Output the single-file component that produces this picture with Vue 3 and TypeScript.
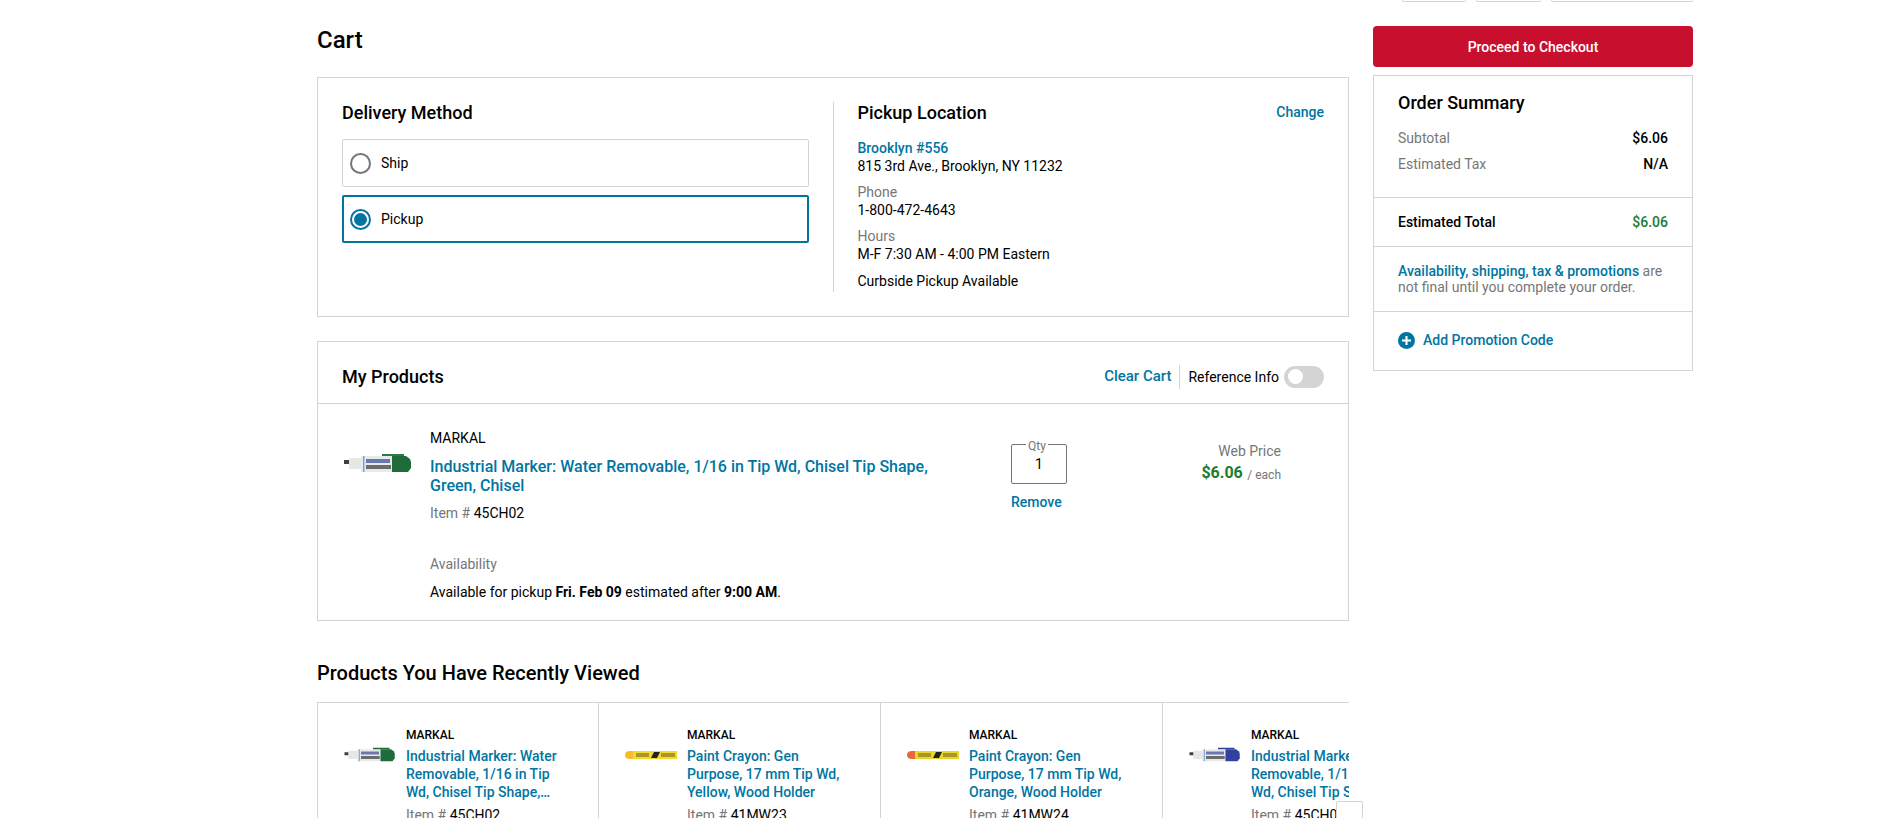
<script setup lang="ts">
interface RecentItem {
  kind: 'marker' | 'crayon'
  color: string
  band?: string
  title: string
  sku: string
}

const recent: RecentItem[] = [
  { kind: 'marker', color: '#1f6b3a', title: 'Industrial Marker: Water Removable, 1/16 in Tip Wd, Chisel Tip Shape,…', sku: '45CH02' },
  { kind: 'crayon', color: '#f5bc2a', band: '#f4d92e', title: 'Paint Crayon: Gen Purpose, 17 mm Tip Wd, Yellow, Wood Holder', sku: '41MW23' },
  { kind: 'crayon', color: '#e8683a', band: '#e9d828', title: 'Paint Crayon: Gen Purpose, 17 mm Tip Wd, Orange, Wood Holder', sku: '41MW24' },
  { kind: 'marker', color: '#34409e', title: 'Industrial Marker: Water Removable, 1/16 in Tip Wd, Chisel Tip Shape,…', sku: '45CH03' },
]
</script>

<template>
  <div class="page">
    <main class="main-col">
      <h1 class="cart-title">Cart</h1>

      <!-- delivery -->
      <section class="card delivery">
        <div class="delivery-left">
          <h2 class="h2">Delivery Method</h2>
          <div class="radio-box">
            <span class="radio"></span>
            <span>Ship</span>
          </div>
          <div class="radio-box selected">
            <span class="radio on"></span>
            <span>Pickup</span>
          </div>
        </div>
        <div class="delivery-right">
          <div class="loc-head">
            <h2 class="h2">Pickup Location</h2>
            <a class="link strong change">Change</a>
          </div>
          <div class="loc-group">
            <a class="link strong block">Brooklyn #556</a>
            <div>815 3rd Ave., Brooklyn, NY 11232</div>
          </div>
          <div class="loc-group">
            <div class="muted">Phone</div>
            <div>1-800-472-4643</div>
          </div>
          <div class="loc-group">
            <div class="muted">Hours</div>
            <div>M-F 7:30 AM - 4:00 PM Eastern</div>
          </div>
          <div class="loc-group curbside">Curbside Pickup Available</div>
        </div>
      </section>

      <!-- my products -->
      <section class="card products">
        <div class="products-head">
          <h2 class="h2">My Products</h2>
          <div class="head-actions">
            <a class="link strong clear">Clear Cart</a>
            <span class="vline"></span>
            <span>Reference Info</span>
            <span class="toggle"><span class="knob"></span></span>
          </div>
        </div>
        <div class="line-item">
          <svg class="thumb" viewBox="0 0 68 20">
            <rect x="0" y="7" width="6" height="4" fill="#3c4038" />
            <rect x="5" y="5" width="13" height="11" fill="#e6e8e8" />
            <rect x="17" y="3" width="33" height="16" rx="1" fill="#e8eaea" />
            <rect x="19" y="3" width="1.5" height="16" fill="#7aa2d4" />
            <rect x="22" y="6" width="24" height="4" fill="#6a78b0" />
            <rect x="22" y="12" width="25" height="4" fill="#6c6c6c" />
            <rect x="38" y="1" width="22" height="2" fill="#2c7a4a" />
            <path d="M48 3 L62 3 L66 6 L67 9 L67 15 L64 19 L48 19 Z" fill="#1f6b3a" />
          </svg>
          <div class="item-info">
            <div class="brand">MARKAL</div>
            <a class="link item-title">Industrial Marker: Water Removable, 1/16 in Tip Wd, Chisel Tip Shape, Green, Chisel</a>
            <div class="item-no"><span class="muted">Item #</span> 45CH02</div>
            <div class="muted avail-label">Availability</div>
            <div class="avail">Available for pickup <b>Fri. Feb 09</b> estimated after <b>9:00 AM</b>.</div>
          </div>
          <div class="qty-col">
            <div class="qty-box">
              <span class="qty-label">Qty</span>
              <span>1</span>
            </div>
            <a class="link strong remove">Remove</a>
          </div>
          <div class="price-col">
            <div class="muted">Web Price</div>
            <div class="price-line"><span class="price">$6.06</span> <span class="muted each">/ each</span></div>
          </div>
        </div>
      </section>

      <h2 class="recent-title">Products You Have Recently Viewed</h2>
      <div class="recent">
        <div v-for="r in recent" :key="r.sku" class="slide">
          <svg v-if="r.kind === 'marker'" class="slide-thumb" viewBox="0 0 68 20">
            <rect x="0" y="7" width="6" height="4" fill="#3c4038" />
            <rect x="5" y="5" width="13" height="11" fill="#e6e8e8" />
            <rect x="17" y="3" width="33" height="16" rx="1" fill="#e8eaea" />
            <rect x="19" y="3" width="1.5" height="16" fill="#7aa2d4" />
            <rect x="22" y="6" width="24" height="4" fill="#6a78b0" />
            <rect x="22" y="12" width="25" height="4" fill="#6c6c6c" />
            <rect x="38" y="1" width="22" height="2" :fill="r.color" />
            <path d="M48 3 L62 3 L66 6 L67 9 L67 15 L64 19 L48 19 Z" :fill="r.color" />
          </svg>
          <svg v-else class="slide-thumb" viewBox="0 0 52 15">
            <path d="M0 8 Q0 4 5 4 L9 4 L9 12 L5 12 Q0 12 0 8 Z" :fill="r.color" />
            <rect x="8" y="4" width="44" height="8" :fill="r.band" />
            <rect x="11" y="6" width="13" height="4" fill="#a8982c" />
            <path d="M26 11 L29 5 L35 5 L32 11 Z" fill="#222" />
            <rect x="36" y="6" width="14" height="4" fill="#a8982c" />
          </svg>
          <div class="slide-info">
            <div class="slide-brand">MARKAL</div>
            <a class="link slide-title">{{ r.title }}</a>
            <div class="slide-no"><span class="muted">Item #</span> {{ r.sku }}</div>
          </div>
        </div>
      </div>
      <!-- carousel arrow, cut off by the window -->
      <span class="next-btn"></span>
    </main>

    <aside class="side-col">
      <div class="top-btns">
        <span class="top-btn b1"></span>
        <span class="top-btn b2"></span>
        <span class="top-btn b3"></span>
      </div>
      <button class="checkout">Proceed to Checkout</button>
      <section class="summary">
        <div class="sum-block first">
          <h2 class="h2">Order Summary</h2>
          <div class="sum-row sub"><span class="muted">Subtotal</span><b class="val">$6.06</b></div>
          <div class="sum-row tax"><span class="muted">Estimated Tax</span><b class="val">N/A</b></div>
        </div>
        <div class="sum-block total">
          <b class="val">Estimated Total</b>
          <b class="val green">$6.06</b>
        </div>
        <div class="sum-block note">
          <a class="link strong">Availability, shipping, tax &amp; promotions</a>
          <span class="muted"> are not final until you complete your order.</span>
        </div>
        <div class="sum-block promo">
          <svg class="plus" viewBox="0 0 18 18">
            <circle cx="9" cy="9" r="9" fill="#0075a2" />
            <path d="M9 4.2 V13.8 M4.2 9 H13.8" stroke="#fff" stroke-width="2.2" />
          </svg>
          <a class="link strong">Add Promotion Code</a>
        </div>
      </section>
    </aside>
  </div>
</template>

<style scoped>
.page {
  display: flex;
  gap: 24px;
  height: 818px;
  overflow: hidden;
  padding-left: 317px;
  box-sizing: border-box;
  background: #fff;
  color: #000;
  font-family: Roboto, "Liberation Sans", sans-serif;
  font-size: 14px;
  line-height: 18px;
}

.main-col {
  position: relative;
  width: 1032px;
  flex-shrink: 0;
}

.cart-title {
  margin: 0;
  padding-top: 26px;
  height: 77px;
  box-sizing: border-box;
  font-size: 24px;
  line-height: 28px;
  font-weight: 500;
}

.card {
  border: 1px solid #d4d4d4;
  box-sizing: border-box;
}

.h2 {
  margin: 0;
  font-size: 18px;
  line-height: 22px;
  font-weight: 500;
}

.link {
  color: #0075a2;
  text-decoration: none;
}
.strong { font-weight: 500; }
.block { display: block; }
.muted { color: #767676; }

/* 配送方式 */
.delivery {
  display: flex;
  height: 240px;
  padding: 24px;
}

.delivery-left {
  width: 467px;
  flex-shrink: 0;
}
.delivery-left .h2 { margin-bottom: 15px; }

.radio-box {
  display: flex;
  align-items: center;
  gap: 10px;
  height: 48px;
  padding: 0 7px;
  margin-bottom: 8px;
  box-sizing: border-box;
  border: 1px solid #d4d4d4;
  border-radius: 2px;
}
.radio-box.selected {
  border: 2px solid #0075a2;
  padding: 0 6px;
}

.radio {
  width: 21px;
  height: 21px;
  box-sizing: border-box;
  border: 2px solid #767676;
  border-radius: 50%;
  background: #fff;
}
.radio.on {
  border-color: #0075a2;
  padding: 2px;
  background: #0075a2 content-box;
}

.delivery-right {
  flex: 1;
  margin-left: 24px;
  padding-left: 23.5px;
  border-left: 1px solid #d4d4d4;
}
.loc-head {
  display: flex;
  justify-content: space-between;
  margin-bottom: 15px;
}
.change { line-height: 20px; }
.loc-group { margin-bottom: 8px; }
.curbside { margin-top: 9px; }

/* 商品列表 */
.products {
  height: 280px;
  margin-top: 24px;
}
.products-head {
  display: flex;
  align-items: center;
  justify-content: space-between;
  height: 62px;
  padding: 8px 24px 0;
  box-sizing: border-box;
  border-bottom: 1px solid #d4d4d4;
}
.head-actions {
  display: flex;
  align-items: center;
}
.clear { font-size: 15px; margin-top: -1px; }
.vline {
  width: 1px;
  height: 24px;
  margin: 0 8px;
  background: #d4d4d4;
}
.toggle {
  display: flex;
  align-items: center;
  width: 40px;
  height: 22px;
  margin-left: 5px;
  padding-left: 4px;
  box-sizing: border-box;
  border-radius: 11px;
  background: #d4d4d4;
}
.knob {
  width: 15px;
  height: 15px;
  border-radius: 50%;
  background: #fff;
}

.line-item {
  display: flex;
  padding: 25px 24px 0 26px;
}
.thumb {
  width: 68px;
  height: 20px;
  margin: 24px 18px 0 0;
  flex-shrink: 0;
  filter: blur(0.6px);
}
.item-info {
  width: 440px;
  margin-right: 141px;
  flex-shrink: 0;
}
.brand { margin-bottom: 10px; }
.item-title {
  display: block;
  width: 520px;
  font-size: 16px;
  line-height: 19px;
  font-weight: 500;
}
.item-no { margin-top: 9px; }
.avail-label { margin-top: 33px; }
.avail { margin-top: 10px; white-space: nowrap; }

.qty-col { width: 56px; flex-shrink: 0; margin-top: 15px; }
.qty-box {
  position: relative;
  display: flex;
  align-items: center;
  justify-content: center;
  height: 40px;
  box-sizing: border-box;
  border: 1px solid #767676;
  border-radius: 2px;
}
.qty-label {
  position: absolute;
  top: -6px;
  left: 14px;
  padding: 0 2px;
  background: #fff;
  color: #767676;
  font-size: 12px;
  line-height: 14px;
}
.remove { display: block; margin-top: 9px; }

.price-col {
  flex: 1;
  margin-top: 13px;
  padding-right: 43px;
  text-align: right;
}
.price-line { margin-top: 1px; line-height: 24px; }
.price {
  color: #1c7c2d;
  font-size: 16px;
  font-weight: 700;
}
.each { font-size: 12px; margin-left: 1px; vertical-align: -1px; }

/* 最近浏览 */
.recent-title {
  margin: 40px 0 0;
  height: 41px;
  font-size: 20px;
  line-height: 24px;
  font-weight: 500;
}

.recent {
  display: flex;
  overflow: hidden;
  border-top: 1px solid #d4d4d4;
  border-left: 1px solid #d4d4d4;
  height: 116px;
}
.slide {
  display: flex;
  width: 282px;
  flex-shrink: 0;
  padding: 23px 0 0 26px;
  box-sizing: border-box;
  border-right: 1px solid #d4d4d4;
}
.slide:first-child { width: 281px; }
.slide-thumb {
  width: 52px;
  height: 15px;
  margin: 21px 10px 0 0;
  flex-shrink: 0;
  filter: blur(0.5px);
}
.slide-info { width: 160px; flex-shrink: 0; }
.slide-brand {
  font-size: 12px;
  font-weight: 500;
}
.slide-title {
  display: block;
  margin-top: 3px;
  font-weight: 500;
}
.slide-no { margin-top: 5px; white-space: nowrap; }

.next-btn {
  position: absolute;
  top: 801px;
  left: 1019px;
  width: 27px;
  height: 28px;
  box-sizing: border-box;
  border: 1px solid #d4d4d4;
  border-radius: 2px;
  background: #fff;
}

/* 右侧栏 */
.side-col {
  width: 320px;
  flex-shrink: 0;
}
.top-btns {
  display: flex;
  height: 2px;
  margin-left: 29px;
  gap: 10px;
}
.top-btn {
  height: 2px;
  box-sizing: border-box;
  border: 1px solid #d4d4d4;
  border-top: 0;
  border-radius: 0 0 3px 3px;
}
.b1 { width: 64px; }
.b2 { width: 65px; }
.b3 { width: 142px; }

.checkout {
  display: block;
  width: 320px;
  height: 41px;
  margin-top: 24px;
  border: 0;
  border-radius: 4px;
  background: #c8102e;
  color: #fff;
  font-family: inherit;
  font-size: 14px;
  font-weight: 500;
}

.summary {
  margin-top: 8px;
  height: 296px;
  box-sizing: border-box;
  border: 1px solid #d4d4d4;
}
.sum-block {
  padding: 0 24px;
  border-bottom: 1px solid #d4d4d4;
  box-sizing: border-box;
}
.sum-block:last-child { border-bottom: 0; }
.first { height: 122px; padding-top: 16px; }
.sum-row {
  display: flex;
  justify-content: space-between;
}
.sub { margin-top: 15px; }
.tax { margin-top: 8px; }
.val { font-weight: 500; }
.total {
  display: flex;
  align-items: center;
  justify-content: space-between;
  height: 49px;
}
.green { color: #1c7c2d; }
.note {
  height: 65px;
  padding-top: 16px;
  padding-right: 20px;
  line-height: 16px;
}
.promo {
  display: flex;
  align-items: center;
  gap: 8px;
  height: 58px;
  padding-bottom: 2px;
}
.plus { width: 17px; height: 17px; flex-shrink: 0; }
</style>

<style>
html, body { overflow: hidden; background: #fff; }
</style>
